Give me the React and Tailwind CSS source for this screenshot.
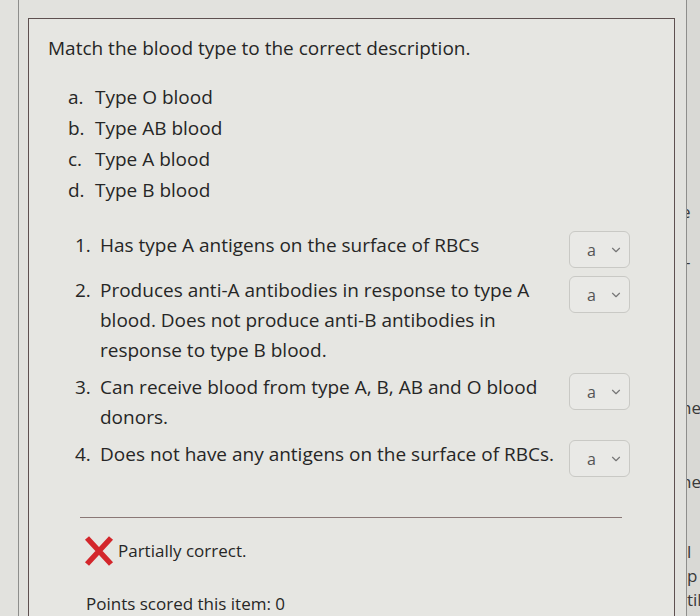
import { ChevronDown } from 'lucide-react';

const types = [
    ['a.', 'Type O blood'],
    ['b.', 'Type AB blood'],
    ['c.', 'Type A blood'],
    ['d.', 'Type B blood'],
];

const items = [
    ['1.', 'Has type A antigens on the surface of RBCs'],
    ['2.', 'Produces anti-A antibodies in response to type A blood. Does not produce anti-B antibodies in response to type B blood.'],
    ['3.', 'Can receive blood from type A, B, AB and O blood donors.'],
    ['4.', 'Does not have any antigens on the surface of RBCs.'],
];

function Select() {
    return (
        <div className="mt-px flex h-[37px] w-[61px] shrink-0 items-center rounded-md border border-[#c9c9c5] bg-[#e9e9e6] pl-[17px] pr-[6px] text-[16px] text-[#555]">
            <span className="flex-1">a</span>
            <ChevronDown className="h-[14px] w-[14px] text-[#777]" strokeWidth={2} />
        </div>
    );
}

function RedX() {
    return (
        <svg width="32" height="32" viewBox="0 0 32 32" className="shrink-0">
            <path d="M4 3 L28 29 M28 3 L4 29" stroke="#d3262b" strokeWidth="5.5" strokeLinecap="butt" />
        </svg>
    );
}

export default function App() {
    return (
        <div className="flex h-[616px] w-[700px] overflow-hidden bg-[#e2e2de] font-['Open_Sans',sans-serif] text-[#262626]">
            <div className="w-[18px] shrink-0" />

            <div className="w-[669px] shrink-0 border-l border-r border-[#8e8e8c] pl-[9px] pt-[18px]">
                <div className="h-[640px] w-[647px] border border-[#5e5050] bg-[#e6e6e2] px-[19px] pt-[16px]">
                    <p className="text-[19px] leading-[26px]">
                        Match the blood type to the correct description.
                    </p>

                    <div className="ml-[20px] mt-[21px] text-[19px] leading-[31px]">
                        {types.map(([letter, label]) => (
                            <div key={letter} className="flex">
                                <span className="w-[27px]">{letter}</span>
                                <span>{label}</span>
                            </div>
                        ))}
                    </div>

                    <div className="ml-[27px] mt-[24px] flex flex-col gap-[7px] text-[19px] leading-[30px]">
                        {items.map(([num, text]) => (
                            <div key={num} className="flex items-start">
                                <span className="w-[25px] shrink-0">{num}</span>
                                <span className="w-[469px] shrink-0 pr-[14px]">{text}</span>
                                <Select />
                            </div>
                        ))}
                    </div>

                    <div className="ml-[32px] mt-[40px] h-px w-[542px] bg-[#8a7876]" />

                    <div className="ml-[35px] mt-[17px] flex items-center gap-[3px] text-[17px]">
                        <RedX />
                        <span>Partially correct.</span>
                    </div>

                    <p className="ml-[38px] mt-[25px] text-[17px] leading-[24px]">
                        Points scored this item: 0
                    </p>
                </div>
            </div>

            <div className="flex flex-1 flex-col overflow-hidden bg-[#d9d9d5] pt-[200px] text-[17px] leading-[24px] text-[#3a3a3a]">
                <span className="-ml-[6px]">e</span>
                <span className="mt-[26px] -ml-[2px]">-</span>
                <span className="mt-[122px] -ml-[6px]">he</span>
                <span className="mt-[50px] -ml-[6px]">he</span>
                <span className="mt-[46px] ml-0">l p</span>
                <span className="mt-0 ml-0">til</span>
            </div>
        </div>
    );
}
